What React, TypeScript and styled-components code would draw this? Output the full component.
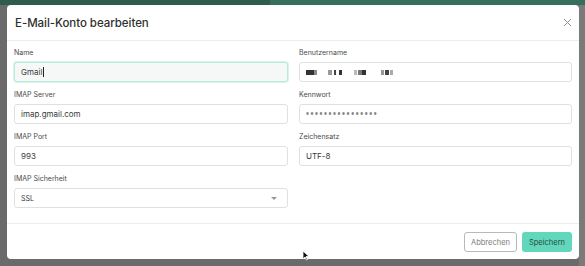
import React from "react";
import styled, { createGlobalStyle, css } from "styled-components";

const GlobalStyle = createGlobalStyle`
  html, body {
    margin: 0;
    padding: 0;
    background: #6c6c6c;
  }
  body {
    font-family: "Inter", "Liberation Sans", sans-serif;
    color: #363636;
  }
`;

const Page = styled.div`
  position: relative;
  width: 585px;
  height: 266px;
  overflow: hidden;
  display: flex;
  flex-direction: column;
  background: #6c6c6c;
`;

const TopBar = styled.div`
  height: 5px;
  flex-shrink: 0;
  background: linear-gradient(90deg, #2e5d50 0 270px, #35705f 270px 100%);
`;

const Backdrop = styled.div`
  flex: 1;
  display: flex;
  padding: 0 6px 0 7px;
  background: linear-gradient(90deg, #6a6a6a 0 579px, #7a7a7a 579px);
`;

const Modal = styled.div`
  width: 572px;
  height: 254px;
  background: #fff;
  border-radius: 4px;
  display: flex;
  flex-direction: column;
  overflow: hidden;
`;

const Header = styled.header`
  height: 35px;
  flex-shrink: 0;
  display: flex;
  align-items: center;
  justify-content: space-between;
  padding: 0 6px 0 8px;
  border-bottom: 1px solid #ececec;
`;

const Title = styled.h1`
  margin: 0;
  font-size: 11.5px;
  font-weight: 500;
  color: #2f2f2f;
  letter-spacing: -0.05px;
`;

const Close = styled.button`
  width: 12px;
  height: 12px;
  padding: 0;
  border: 0;
  background: none;
  display: flex;
  align-items: center;
  justify-content: center;
`;

const Body = styled.section`
  flex: 1;
  display: grid;
  grid-template-columns: 274px 273px;
  column-gap: 11px;
  align-content: start;
  padding: 7px 7px 0 7px;
  border-bottom: 1px solid #ececec;
`;

const Field = styled.div`
  display: flex;
  flex-direction: column;
  margin-bottom: 8px;
`;

const Label = styled.label`
  height: 10px;
  line-height: 10px;
  font-size: 7px;
  font-weight: 400;
  color: #4a4a4a;
  margin-bottom: 4px;
`;

const Input = styled.div<{ $focused?: boolean }>`
  height: 20px;
  box-sizing: border-box;
  border: 1px solid #e0e0e0;
  border-radius: 3px;
  padding: 0 6px;
  display: flex;
  align-items: center;
  font-size: 8px;
  color: #3a3a3a;
  background: #fff;
  ${(p) =>
    p.$focused &&
    css`
      border-color: #b9e9dc;
      background: #f6f8f7;
      box-shadow: 0 0 0 1px #d8f4ec;
    `}
`;

const Caret = styled.span`
  display: inline-block;
  width: 1px;
  height: 10px;
  background: #222;
  margin-left: 0.5px;
`;

const Dots = styled.span`
  font-size: 3.2px;
  letter-spacing: 1.6px;
  color: #8a8a8a;
`;

const Select = styled(Input)`
  justify-content: space-between;
  font-size: 7px;
  padding-right: 10px;
`;

const Arrow = styled.span`
  width: 0;
  height: 0;
  border-left: 3px solid transparent;
  border-right: 3px solid transparent;
  border-top: 3px solid #999;
`;

const Redacted = styled.span`
  display: flex;
  align-items: center;
`;

const Block = styled.span<{ $w: number; $shade: string; $gap?: number }>`
  display: inline-block;
  width: ${(p) => p.$w}px;
  height: 5px;
  background: ${(p) => p.$shade};
  margin-left: ${(p) => p.$gap ?? 0}px;
`;

const Footer = styled.footer`
  flex-shrink: 0;
  display: flex;
  justify-content: flex-end;
  gap: 5px;
  padding: 8px 7px 7px;
`;

const Button = styled.button<{ $primary?: boolean }>`
  height: 20px;
  box-sizing: border-box;
  border-radius: 3px;
  font-family: "Inter", "Liberation Sans", sans-serif;
  font-size: 7.5px;
  padding: 0 6px;
  cursor: pointer;
  ${(p) =>
    p.$primary
      ? css`
          width: 50px;
          border: 0;
          background: #62d7bb;
          color: #1f4b3f;
        `
      : css`
          width: 53px;
          border: 1px solid #b9b9b9;
          background: #fff;
          color: #7a7a7a;
        `}
`;

const Pointer = styled.svg`
  position: absolute;
  left: 302px;
  top: 250px;
`;

// pixelated username: [width, shade, gap before]
const blocks: [number, string, number][] = [
  [8, "#333", 0],
  [3, "#8a8a8a", 0],
  [4, "#9a9a9a", 11],
  [2, "#444", 2],
  [3, "#333", 3],
  [3, "#bbb", 12],
  [4, "#777", 1],
  [4, "#333", 0],
  [3, "#999", 15],
  [4, "#444", 1],
  [3, "#aaa", 1],
];

export default function App() {
  return (
    <Page>
      <GlobalStyle />
      <TopBar />
      <Backdrop>
        <Modal>
          <Header>
            <Title>E-Mail-Konto bearbeiten</Title>
            <Close aria-label="Schließen">
              <svg width="9" height="9" viewBox="0 0 9 9">
                <path d="M1 1L8 8M8 1L1 8" stroke="#8c8c8c" strokeWidth="1" />
              </svg>
            </Close>
          </Header>
          <Body>
            <Field>
              <Label>Name</Label>
              <Input $focused>
                Gmail
                <Caret />
              </Input>
            </Field>
            <Field>
              <Label>Benutzername</Label>
              <Input>
                <Redacted>
                  {blocks.map(([w, shade, gap], i) => (
                    <Block key={i} $w={w} $shade={shade} $gap={gap} />
                  ))}
                </Redacted>
              </Input>
            </Field>
            <Field>
              <Label>IMAP Server</Label>
              <Input>imap.gmail.com</Input>
            </Field>
            <Field>
              <Label>Kennwort</Label>
              <Input>
                <Dots>{"●".repeat(16)}</Dots>
              </Input>
            </Field>
            <Field>
              <Label>IMAP Port</Label>
              <Input>993</Input>
            </Field>
            <Field>
              <Label>Zeichensatz</Label>
              <Input>UTF-8</Input>
            </Field>
            <Field>
              <Label>IMAP Sicherheit</Label>
              <Select>
                SSL
                <Arrow />
              </Select>
            </Field>
          </Body>
          <Footer>
            <Button>Abbrechen</Button>
            <Button $primary>Speichern</Button>
          </Footer>
        </Modal>
      </Backdrop>
      <Pointer width="8" height="11" viewBox="0 0 8 11">
        <path d="M1 1L1 9L3 7L4.5 10L5.5 9.5L4 6.5L7 6.5Z" fill="#111" stroke="#fff" strokeWidth="0.8" />
      </Pointer>
    </Page>
  );
}
